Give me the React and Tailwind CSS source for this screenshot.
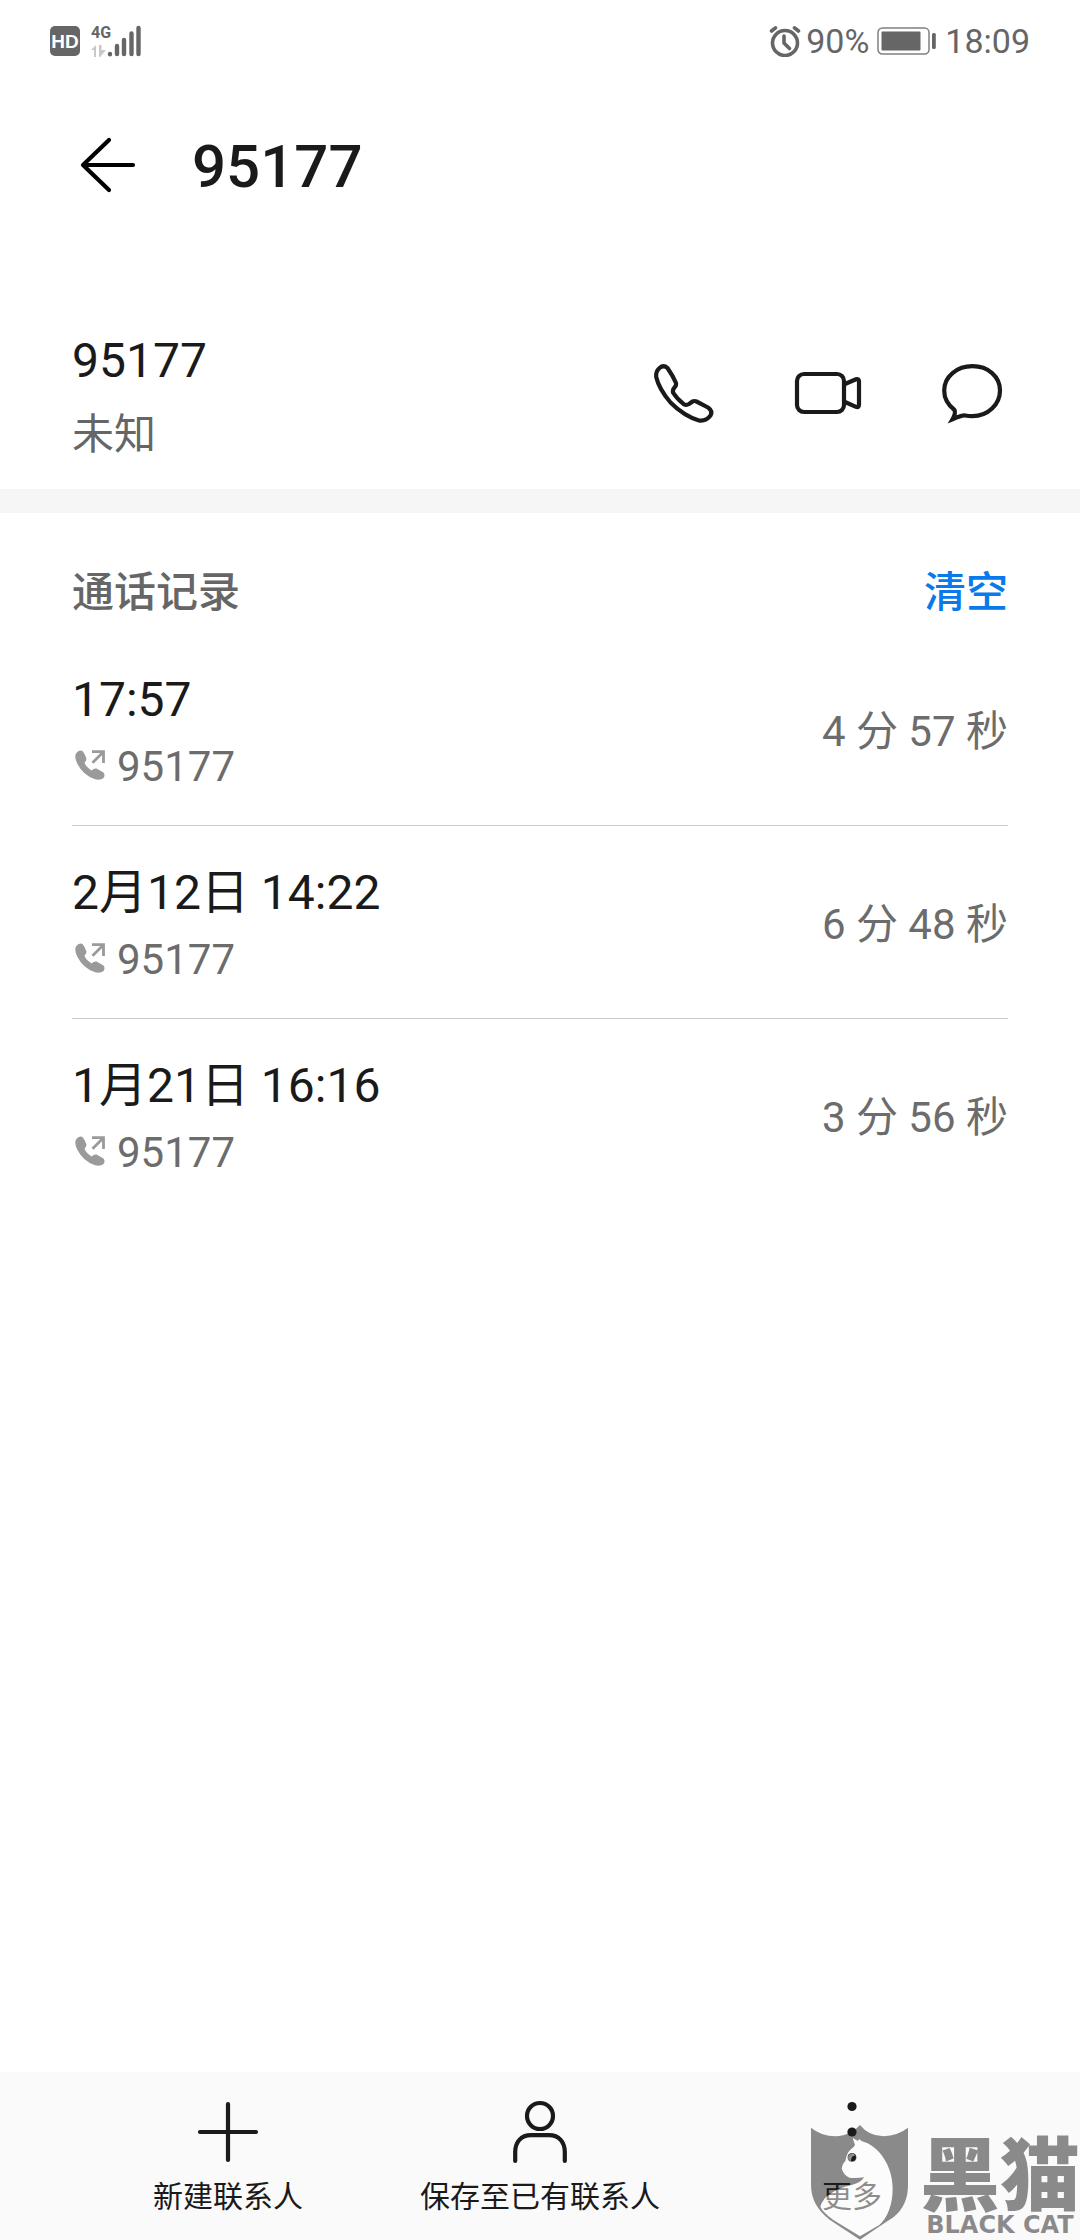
const calls = [
  { time: '17:57', number: '95177', duration: '4 分 57 秒' },
  { time: '2月12日 14:22', number: '95177', duration: '6 分 48 秒' },
  { time: '1月21日 16:16', number: '95177', duration: '3 分 56 秒' },
];

function StatusBar() {
  return (
    <header className="flex h-[82px] items-center justify-between px-[50px] text-[#666666]">
      <div className="flex items-center">
        <span className="flex h-[30px] w-[30px] items-center justify-center rounded-[5px] bg-[#666666] font-['Liberation_Sans'] text-[19px] leading-none font-bold text-white">
          HD
        </span>
        <div className="ml-[11px] flex h-8 flex-col justify-between">
          <span className="font-['Roboto',sans-serif] text-[16px] leading-4 font-bold">4G</span>
          <svg width="16" height="12" viewBox="0 0 16 12" aria-hidden="true">
            <path d="M0 5 5 0V12H3V5ZM8 0H10.500V5H15L9 12H8Z" fill="#c8c8c8" />
          </svg>
        </div>
        <svg className="-ml-1" width="34" height="32" viewBox="0 0 34 32" stroke="currentColor" strokeWidth="4.400" strokeLinecap="round" aria-hidden="true">
          <path d="M3 29V29.2M10 21V29M17 15V29M24.5 8.500V29M31.500 3V29" />
        </svg>
      </div>
      <div className="flex items-center text-[34px] leading-10">
        <svg width="32" height="32" viewBox="0 0 32 32" fill="none" stroke="currentColor" strokeWidth="3.600" strokeLinecap="round" strokeLinejoin="round" aria-hidden="true">
          <circle cx="16" cy="18" r="12.500" />
          <path d="M15 11V18L20.500 23.500" />
          <path d="M2.500 6 6.500 2.800M29.500 6 25.500 2.800" />
        </svg>
        <span className="ml-[5px]">90%</span>
        <svg className="ml-2" width="60" height="28" viewBox="0 0 60 28" fill="none" aria-hidden="true">
          <rect x="1" y="1" width="51" height="26" rx="4.500" stroke="#808080" strokeWidth="1.500" />
          <rect x="4.500" y="4.500" width="39" height="19" rx="1" fill="currentColor" />
          <rect x="55" y="6" width="3.800" height="16" rx="1.500" fill="currentColor" />
        </svg>
        <span className="ml-2">18:09</span>
      </div>
    </header>
  );
}

function BackIcon() {
  return (
    <svg width="60" height="60" viewBox="0 0 60 60" fill="none" stroke="#000" strokeWidth="4.200" strokeLinecap="round" strokeLinejoin="round" aria-hidden="true">
      <path d="M55 30H5M31 5 5 30 31 55" />
    </svg>
  );
}

const lineIcon = {
  width: 72,
  height: 72,
  viewBox: '0 0 72 72',
  fill: 'none',
  stroke: '#1a1a1a',
  strokeWidth: 4.2,
  strokeLinejoin: 'round',
  strokeLinecap: 'round',
  'aria-hidden': true,
};

function PhoneIcon() {
  return (
    <svg {...lineIcon}>
      <path d="M11.500 10Q15.500 6.500 19.500 10Q25 18 28 25Q28.500 27.500 26.500 29.500Q24.500 31.500 25 34.500Q29 41 36 46.300Q38.500 47.500 41 46L44.500 43.500Q46.500 42.500 48.500 43.500L60 49.500Q65 53 62.500 57.500Q58 63.500 51 62.500Q36 58 22.500 44.500Q11 31 8.200 19Q7.500 13.500 11.500 10Z" />
    </svg>
  );
}

function VideoIcon() {
  return (
    <svg {...lineIcon}>
      <rect x="5" y="16" width="47" height="38" rx="7" />
      <path d="M53 26 64 21.300Q67 20.500 67 23.500V46.500Q67 50 64 48.800L53 44" />
    </svg>
  );
}

function MessageIcon() {
  return (
    <svg {...lineIcon} strokeLinejoin="miter">
      <path d="M36.500 8.200C52 8.200 64 18.500 64 32.500S52 58.200 36.500 58.200Q32.500 58.200 29 57.500Q26.500 57 16.500 61.200Q20 55 18.500 52C12 47 8.200 40.500 8.200 32.500C8.200 18.500 21 8.200 36.500 8.200Z" />
    </svg>
  );
}

function OutgoingIcon() {
  return (
    <svg className="mb-1" width="30" height="30" viewBox="0 0 30 30" fill="#9a9a9a" aria-hidden="true">
      <path d="M1 3.500Q4-1 7.500 1Q10 4 11.500 8.500Q11.500 10.500 9.500 12.500Q10 16 16.500 20.500Q19 18 21.500 18.500L28.500 22.500Q30.500 25 28.500 28Q25 31 19.500 29Q8 25 2.500 14Q-1 7.500 1 3.500Z" />
      <path d="M17 1.700H28.500V13M28 2.200 17.500 12.700" fill="none" stroke="#9a9a9a" strokeWidth="2.800" />
    </svg>
  );
}

function PlusIcon() {
  return (
    <svg {...lineIcon}>
      <path d="M36 8V64M8 36H64" />
    </svg>
  );
}

function PersonIcon() {
  return (
    <svg {...lineIcon}>
      <circle cx="36" cy="20" r="13" />
      <path d="M11.200 65V56C11.200 46 17 39.200 27 39.200H45C55 39.200 60.800 46 60.800 56V65" />
    </svg>
  );
}

function MoreIcon() {
  return (
    <svg width="72" height="72" viewBox="0 0 72 72" fill="#1a1a1a" aria-hidden="true">
      <circle cx="36" cy="10.500" r="4.600" />
      <circle cx="36" cy="36" r="4.600" />
      <circle cx="36" cy="61.500" r="4.600" />
    </svg>
  );
}

function Watermark() {
  return (
    <div className="pointer-events-none absolute right-0 bottom-0 flex items-end gap-[11px] text-[#1e1c1d] opacity-50">
      <svg width="99" height="116" viewBox="90 192 297 348" aria-hidden="true">
        <path fill="currentColor" d="M93 203Q128 232 178 228Q216 222 240 195Q266 228 310 229Q355 226 384 203V375Q384 437 340 472Q305 495 240 539Q180 500 150 480Q93 437 93 375Z" />
        <path fill="#fff" d="M218 234 234 243 237 237 246 244C296 256 338 318 338 385C338 436 322 474 298 495L240 529L160 480Q128 456 121 440Q128 416 150 402Q176 384 212 376Q244 368 252 352Q230 355 208 353Q190 346 185 325Q186 312 196 303Q200 279 211 269Q222 262 225 255Z" />
        <circle cx="216" cy="292" r="12" fill="currentColor" />
        <path d="M204 292A12 12 0 0 1 226 286L216 290 212 304A12 12 0 0 1 204 292Z" fill="#fff" />
      </svg>
      <div className="flex flex-col items-center pb-[3px]">
        <span className="mb-1 font-['Noto_Sans_CJK_SC',sans-serif] text-[80px] leading-[80px] font-black">黑猫</span>
        <span className="font-['DejaVu_Sans',sans-serif] text-[24px] leading-6 font-bold whitespace-nowrap">BLACK CAT</span>
      </div>
    </div>
  );
}

function NavButton({ icon, label }) {
  return (
    <button type="button" className="flex flex-1 flex-col items-center gap-[11px] text-[30px] leading-9 text-[#1a1a1a]">
      {icon}
      <span className="whitespace-nowrap">{label}</span>
    </button>
  );
}

export default function App() {
  return (
    <div lang="zh-CN" className="flex min-h-screen flex-col bg-white font-['Roboto','Noto_Sans_CJK_SC',sans-serif] text-[#1a1a1a]">
      <StatusBar />

      <div className="flex h-[166px] items-center gap-[54px] px-[78px]">
        <button type="button" aria-label="返回">
          <BackIcon />
        </button>
        <h1 className="pt-1 text-[60px] leading-[72px] font-medium">95177</h1>
      </div>

      <section className="flex items-center justify-between px-[72px] pt-[82px] pb-8">
        <div>
          <p className="text-[48px] leading-[62px]">95177</p>
          <p className="mt-[21px] text-[42px] leading-[44px] text-[#666666]">未知</p>
        </div>
        <div className="flex gap-[72px]">
          <button type="button" aria-label="拨打电话">
            <PhoneIcon />
          </button>
          <button type="button" aria-label="视频通话">
            <VideoIcon />
          </button>
          <button type="button" aria-label="发送信息">
            <MessageIcon />
          </button>
        </div>
      </section>

      <div className="h-6 bg-[#f6f6f6]" />

      <main className="flex-1 px-[72px] pt-14">
        <div className="flex items-center justify-between pb-4 text-[42px] leading-[48px] font-medium">
          <h2 className="text-[#666666]">通话记录</h2>
          <button type="button" className="text-[#0a7aea]">清空</button>
        </div>
        <ul>
          {calls.map((call) => (
            <li key={call.time} className="flex items-center justify-between border-b border-[#cccccc] pt-[39px] pb-[34px] last:border-b-0">
              <div>
                <p className="text-[48px] leading-[56px]">{call.time}</p>
                <p className="mt-[15px] flex items-center gap-3 pl-[3px] text-[42px] leading-[48px] text-[#6c6c6c]">
                  <OutgoingIcon />
                  {call.number}
                </p>
              </div>
              <p className="text-[42px] leading-[48px] text-[#6c6c6c]">{call.duration}</p>
            </li>
          ))}
        </ul>
      </main>

      <footer className="relative bg-[#fafafa]">
        <nav className="flex px-[72px] pt-6 pb-[25px]">
          <NavButton icon={<PlusIcon />} label="新建联系人" />
          <NavButton icon={<PersonIcon />} label="保存至已有联系人" />
          <NavButton icon={<MoreIcon />} label="更多" />
        </nav>
        <Watermark />
      </footer>
    </div>
  );
}
